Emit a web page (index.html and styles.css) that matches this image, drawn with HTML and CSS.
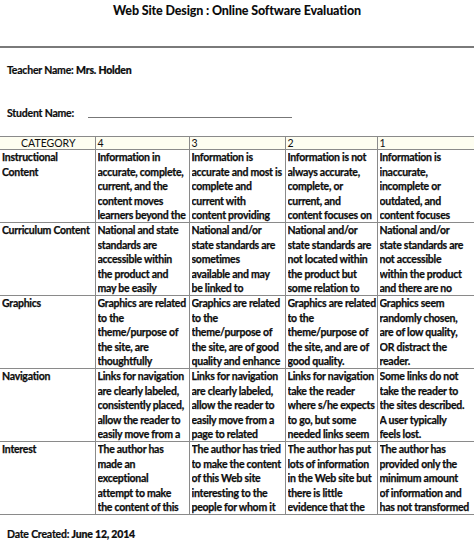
FILE: index.html
```html
<!DOCTYPE html>
<html>
<head>
<meta charset="utf-8">
<link rel="stylesheet" href="styles.css">
</head>
<body>
<div class="page">
  <h1 class="title">Web Site Design : Online Software Evaluation</h1>
  <div class="rule"></div>
  <p class="field teacher">Teacher Name: <span class="val">Mrs. Holden</span></p>
  <p class="field student">Student Name: <span class="blank"></span></p>
  <table class="rubric">
    <colgroup>
      <col class="c0"><col class="c1"><col class="c2"><col class="c3"><col class="c4">
    </colgroup>
    <tr class="head">
      <th class="cat">CATEGORY</th><th>4</th><th>3</th><th>2</th><th>1</th>
    </tr>
    <tr>
      <td><div class="cell">Instructional<br>Content</div></td>
      <td><div class="cell">Information in<br>accurate, complete,<br>current, and the<br>content moves<br>learners beyond the</div></td>
      <td><div class="cell">Information is<br>accurate and most is<br>complete and<br>current with<br>content providing</div></td>
      <td><div class="cell">Information is not<br>always accurate,<br>complete, or<br>current, and<br>content focuses on</div></td>
      <td><div class="cell">Information is<br>inaccurate,<br>incomplete or<br>outdated, and<br>content focuses</div></td>
    </tr>
    <tr>
      <td><div class="cell">Curriculum Content</div></td>
      <td><div class="cell">National and state<br>standards are<br>accessible within<br>the product and<br>may be easily</div></td>
      <td><div class="cell">National and/or<br>state standards are<br>sometimes<br>available and may<br>be linked to</div></td>
      <td><div class="cell">National and/or<br>state standards are<br>not located within<br>the product but<br>some relation to</div></td>
      <td><div class="cell">National and/or<br>state standards are<br>not accessible<br>within the product<br>and there are no</div></td>
    </tr>
    <tr>
      <td><div class="cell">Graphics</div></td>
      <td><div class="cell">Graphics are related<br>to the<br>theme/purpose of<br>the site, are<br>thoughtfully</div></td>
      <td><div class="cell">Graphics are related<br>to the<br>theme/purpose of<br>the site, are of good<br>quality and enhance</div></td>
      <td><div class="cell">Graphics are related<br>to the<br>theme/purpose of<br>the site, and are of<br>good quality.</div></td>
      <td><div class="cell">Graphics seem<br>randomly chosen,<br>are of low quality,<br>OR distract the<br>reader.</div></td>
    </tr>
    <tr>
      <td><div class="cell">Navigation</div></td>
      <td><div class="cell">Links for navigation<br>are clearly labeled,<br>consistently placed,<br>allow the reader to<br>easily move from a</div></td>
      <td><div class="cell">Links for navigation<br>are clearly labeled,<br>allow the reader to<br>easily move from a<br>page to related</div></td>
      <td><div class="cell">Links for navigation<br>take the reader<br>where s/he expects<br>to go, but some<br>needed links seem</div></td>
      <td><div class="cell">Some links do not<br>take the reader to<br>the sites described.<br>A user typically<br>feels lost.</div></td>
    </tr>
    <tr>
      <td><div class="cell">Interest</div></td>
      <td><div class="cell">The author has<br>made an<br>exceptional<br>attempt to make<br>the content of this</div></td>
      <td><div class="cell">The author has tried<br>to make the content<br>of this Web site<br>interesting to the<br>people for whom it</div></td>
      <td><div class="cell">The author has put<br>lots of information<br>in the Web site but<br>there is little<br>evidence that the</div></td>
      <td><div class="cell">The author has<br>provided only the<br>minimum amount<br>of information and<br>has not transformed</div></td>
    </tr>
  </table>
  <p class="field date">Date Created: <span class="val">June 12, 2014</span></p>
</div>
</body>
</html>
```

FILE: styles.css
```css
html, body {
  margin: 0;
  padding: 0;
  background: #ffffff;
}

.page {
  width: 474px;
  height: 542px;
  overflow: hidden;
  font-family: Lato, "Open Sans", sans-serif;
  color: #0d0d0d;
  display: flex;
  flex-direction: column;
}

.title {
  margin: 3px 0 0 0;
  font-size: 12.5px;
  line-height: 15px;
  font-weight: 900;
  text-align: center;
  letter-spacing: -0.15px;
}

.rule {
  margin-top: 28px;
  height: 2px;
  background: #7a7a7a;
}

.field {
  margin: 0;
  font-size: 10.5px;
  line-height: 14px;
  font-weight: 700;
  padding-left: 7px;
  letter-spacing: -0.2px;
  -webkit-text-stroke: 0.2px #0d0d0d;
}

.field .val {
  font-weight: 900;
}

.teacher {
  margin-top: 15px;
}

.student {
  margin-top: 29px;
  display: flex;
  align-items: flex-end;
}

.blank {
  display: inline-block;
  width: 204px;
  margin-left: 14px;
  margin-bottom: 2px;
  border-bottom: 1.5px solid #777777;
}

.rubric {
  margin-top: 16px;
  width: 474px;
  border-collapse: collapse;
  table-layout: fixed;
}

.c0 { width: 95px; }
.c1 { width: 94px; }
.c2 { width: 96px; }
.c3 { width: 92px; }
.c4 { width: 97px; }

.rubric th,
.rubric td {
  border: 1.5px solid #8a8a8a;
  padding: 0 0 0 2px;
  vertical-align: top;
  text-align: left;
}

.rubric tr > :first-child {
  border-left: none;
}

.head th {
  background: #fdfdf0;
  font-weight: 400;
  font-size: 10.5px;
  line-height: 12px;
  height: 12px;
}

.head .cat {
  text-align: center;
}

.cell {
  height: 72px;
  overflow: hidden;
  white-space: nowrap;
  font-size: 10.5px;
  line-height: 14.5px;
  font-weight: 700;
  letter-spacing: -0.25px;
  -webkit-text-stroke: 0.25px #0d0d0d;
}

.date {
  margin-top: 12px;
}
```
